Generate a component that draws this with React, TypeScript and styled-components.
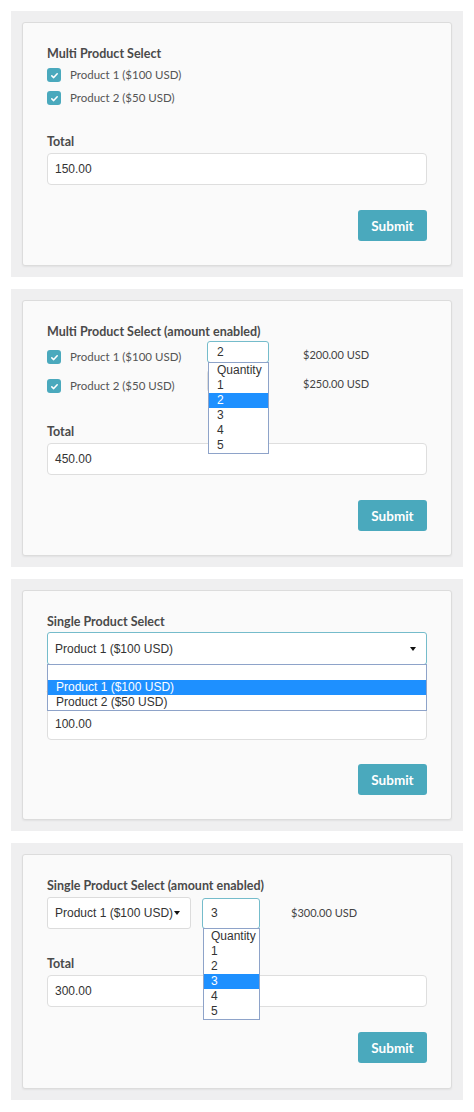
import React from "react";
import styled, { createGlobalStyle } from "styled-components";

const GlobalStyle = createGlobalStyle`
  html, body { margin: 0; padding: 0; background: #ffffff; }
  body { font-family: Lato, "Open Sans", sans-serif; -webkit-font-smoothing: antialiased; }
  * { box-sizing: border-box; }
`;

const Page = styled.div`
  display: flex;
  flex-direction: column;
  gap: 12px;
  padding: 11px;
`;

const Panel = styled.section`
  background: #efeff0;
  padding: 11px;
`;

const Card = styled.form<{ $pt?: number; $pb?: number }>`
  display: flex;
  flex-direction: column;
  background: #fafafa;
  border: 1px solid #dcdcdc;
  border-radius: 3px;
  box-shadow: 0 1px 2px rgba(0, 0, 0, 0.06);
  padding: ${(p) => p.$pt ?? 22}px 24px ${(p) => p.$pb ?? 24}px;
`;

const Title = styled.div`
  font-family: Lato, sans-serif;
  font-weight: 700;
  font-size: 12.5px;
  line-height: 18px;
  color: #4a4a4a;
`;

const Label = styled.div<{ $mt: number }>`
  font-family: Lato, sans-serif;
  font-weight: 700;
  font-size: 12.5px;
  line-height: 18px;
  color: #4a4a4a;
  margin-top: ${(p) => p.$mt}px;
`;

const CheckRow = styled.div<{ $h: number }>`
  display: flex;
  align-items: flex-start;
  height: ${(p) => p.$h}px;
`;

const CheckLabel = styled.label<{ $mt: number; $w?: number }>`
  display: flex;
  align-items: center;
  gap: 9px;
  margin-top: ${(p) => p.$mt}px;
  width: ${(p) => (p.$w ? `${p.$w}px` : "auto")};
  font-family: Lato, sans-serif;
  font-size: 11.5px;
  color: #555;
  line-height: 14px;
`;

const Box = styled.span`
  width: 14px;
  height: 14px;
  border-radius: 3px;
  background: #4aa9bd;
  display: inline-flex;
  align-items: center;
  justify-content: center;
  flex: none;
`;

const Select = styled.div<{ $w: number | string; $h: number; $focused?: boolean; $pl?: number }>`
  position: relative;
  display: flex;
  align-items: center;
  width: ${(p) => (typeof p.$w === "number" ? `${p.$w}px` : p.$w)};
  height: ${(p) => p.$h}px;
  padding: 0 10px 0 ${(p) => p.$pl ?? 7}px;
  background: #fff;
  border: 1px solid ${(p) => (p.$focused ? "#75bccb" : "#dcdcdc")};
  border-radius: 3px;
  font-family: "Liberation Sans", Arial, sans-serif;
  font-size: 12px;
  color: #333;
  flex: none;
`;

const SelectText = styled.span<{ $grow?: boolean }>`
  flex: ${(p) => (p.$grow ? 1 : "none")};
  white-space: nowrap;
`;

const Arrow = styled.span`
  width: 0;
  height: 0;
  border-left: 3.5px solid transparent;
  border-right: 3.5px solid transparent;
  border-top: 4px solid #111;
  margin-left: 1px;
`;

const Dropdown = styled.ul<{ $inset?: number }>`
  position: absolute;
  top: 100%;
  left: ${(p) => p.$inset ?? 0}px;
  right: -1px;
  margin: 0;
  padding: 0;
  list-style: none;
  background: #fff;
  border: 1px solid #8ea3c9;
  z-index: 10;
  font-family: "Liberation Sans", Arial, sans-serif;
  font-size: 12px;
  color: #333;
`;

const Option = styled.li<{ $active?: boolean; $pl?: number }>`
  height: 15px;
  line-height: 15px;
  padding-left: ${(p) => p.$pl ?? 7}px;
  background: ${(p) => (p.$active ? "#1e90ff" : "transparent")};
  color: ${(p) => (p.$active ? "#fff" : "#333")};
  white-space: nowrap;
`;

const Price = styled.span<{ $ml: number; $mt: number }>`
  margin-left: ${(p) => p.$ml}px;
  margin-top: ${(p) => p.$mt}px;
  font-family: Lato, sans-serif;
  font-size: 11px;
  line-height: 14px;
  color: #444;
  white-space: nowrap;
`;

const InlineRow = styled.div<{ $mt: number }>`
  display: flex;
  align-items: center;
  margin-top: ${(p) => p.$mt}px;
`;

const TotalInput = styled.div`
  margin-top: 2px;
  height: 32px;
  display: flex;
  align-items: center;
  padding: 0 7px;
  background: #fff;
  border: 1px solid #dedede;
  border-radius: 4px;
  font-family: "Liberation Sans", Arial, sans-serif;
  font-size: 12px;
  color: #333;
`;

const Submit = styled.button<{ $mt: number }>`
  align-self: flex-end;
  margin-top: ${(p) => p.$mt}px;
  width: 69px;
  height: 31px;
  border: none;
  border-radius: 3px;
  background: #4aa9bd;
  color: #fff;
  font-family: Lato, sans-serif;
  font-weight: 700;
  font-size: 13.5px;
  padding: 0;
`;

const Check = () => (
  <Box>
    <svg width="9" height="9" viewBox="0 0 10 10">
      <path d="M2 5.4 L4.1 7.3 L8 3" fill="none" stroke="#fff" strokeWidth="1.7" strokeLinecap="round" strokeLinejoin="round" />
    </svg>
  </Box>
);

const qty = ["Quantity", "1", "2", "3", "4", "5"];

const QtyList = ({ active, pl, inset }: { active: string; pl: number; inset?: number }) => (
  <Dropdown $inset={inset}>
    {qty.map((q) => (
      <Option key={q} $active={q === active} $pl={pl}>
        {q}
      </Option>
    ))}
  </Dropdown>
);

export default function App() {
  return (
    <>
      <GlobalStyle />
      <Page>
        <Panel>
          <Card>
            <Title>Multi Product Select</Title>
            <CheckRow $h={23}>
              <CheckLabel $mt={5}>
                <Check />
                Product 1 ($100 USD)
              </CheckLabel>
            </CheckRow>
            <CheckRow $h={23}>
              <CheckLabel $mt={5}>
                <Check />
                Product 2 ($50 USD)
              </CheckLabel>
            </CheckRow>
            <Label $mt={24}>Total</Label>
            <TotalInput>150.00</TotalInput>
            <Submit type="button" $mt={25}>Submit</Submit>
          </Card>
        </Panel>

        <Panel>
          <Card>
            <Title>Multi Product Select (amount enabled)</Title>
            <CheckRow $h={29}>
              <CheckLabel $mt={9} $w={160}>
                <Check />
                Product 1 ($100 USD)
              </CheckLabel>
              <Select $w={62} $h={22} $focused $pl={9}>
                <SelectText>2</SelectText>
                <QtyList active="2" pl={8} inset={0} />
              </Select>
              <Price $ml={34} $mt={7}>$200.00 USD</Price>
            </CheckRow>
            <CheckRow $h={29}>
              <CheckLabel $mt={9} $w={160}>
                <Check />
                Product 2 ($50 USD)
              </CheckLabel>
              <Select $w={62} $h={22} $pl={9} />
              <Price $ml={34} $mt={7}>$250.00 USD</Price>
            </CheckRow>
            <Label $mt={24}>Total</Label>
            <TotalInput>450.00</TotalInput>
            <Submit type="button" $mt={25}>Submit</Submit>
          </Card>
        </Panel>

        <Panel>
          <Card>
            <Title>Single Product Select</Title>
            <InlineRow $mt={1}>
              <Select $w="100%" $h={33} $focused>
                <SelectText $grow>Product 1 ($100 USD)</SelectText>
                <Arrow />
                <Dropdown $inset={-1}>
                  <Option $pl={8}>&nbsp;</Option>
                  <Option $active $pl={8}>Product 1 ($100 USD)</Option>
                  <Option $pl={8}>Product 2 ($50 USD)</Option>
                </Dropdown>
              </Select>
            </InlineRow>
            <Label $mt={23}>Total</Label>
            <TotalInput>100.00</TotalInput>
            <Submit type="button" $mt={24}>Submit</Submit>
          </Card>
        </Panel>

        <Panel>
          <Card $pb={25}>
            <Title>Single Product Select (amount enabled)</Title>
            <InlineRow $mt={2}>
              <Select $w={144} $h={32}>
                <SelectText>Product 1 ($100 USD)</SelectText>
                <Arrow />
              </Select>
              <Select $w={58} $h={31} $focused $pl={8} style={{ marginLeft: 11 }}>
                <SelectText>3</SelectText>
                <QtyList active="3" pl={7} inset={0} />
              </Select>
              <Price $ml={31} $mt={0}>$300.00 USD</Price>
            </InlineRow>
            <Label $mt={26}>Total</Label>
            <TotalInput>300.00</TotalInput>
            <Submit type="button" $mt={25}>Submit</Submit>
          </Card>
        </Panel>
      </Page>
    </>
  );
}
